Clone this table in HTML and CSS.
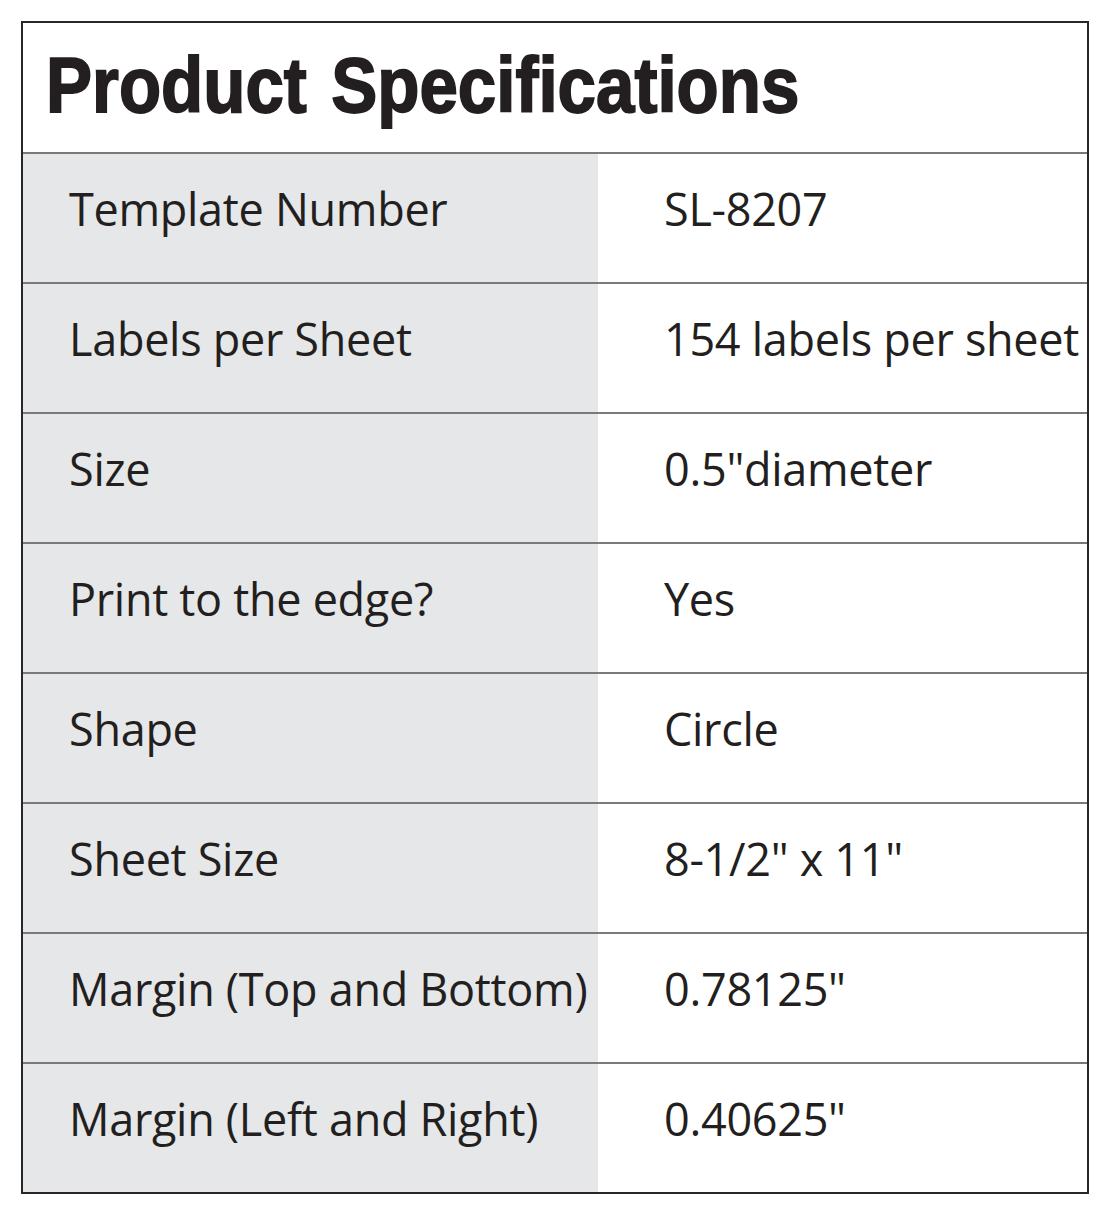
FILE: index.html
```html
<!DOCTYPE html>
<html>
<head>
<meta charset="utf-8">
<link rel="stylesheet" href="styles.css">
</head>
<body>
<div class="specs">
  <div class="title"><span class="title-text">Product Specifications</span></div>
  <div class="row"><div class="label">Template Number</div><div class="value">SL-8207</div></div>
  <div class="row"><div class="label">Labels per Sheet</div><div class="value">154 labels per sheet</div></div>
  <div class="row"><div class="label">Size</div><div class="value">0.5"diameter</div></div>
  <div class="row"><div class="label">Print to the edge?</div><div class="value">Yes</div></div>
  <div class="row"><div class="label">Shape</div><div class="value">Circle</div></div>
  <div class="row"><div class="label">Sheet Size</div><div class="value">8-1/2" x 11"</div></div>
  <div class="row"><div class="label">Margin (Top and Bottom)</div><div class="value">0.78125"</div></div>
  <div class="row"><div class="label">Margin (Left and Right)</div><div class="value">0.40625"</div></div>
</div>
</body>
</html>
```
FILE: styles.css
```css
html, body {
  margin: 0;
  padding: 0;
  background: #ffffff;
}
body {
  padding: 21px 0 0 21px;
}
.specs {
  width: 1068px;
  box-sizing: border-box;
  border: 2px solid #2a2728;
  color: #231f20;
  font-family: "Open Sans", "Noto Sans", sans-serif;
}
.title {
  height: 129px;
  box-sizing: border-box;
  padding: 17px 0 0 23px;
  font-family: "Liberation Sans", Arial, sans-serif;
  font-weight: bold;
  font-size: 78px;
  line-height: 90px;
  color: #231f20;
  white-space: nowrap;
}
.title-text {
  display: inline-block;
  transform: scaleX(0.885);
  transform-origin: left center;
  letter-spacing: 0;
  word-spacing: 6px;
  -webkit-text-stroke: 1.8px #231f20;
}
.row {
  display: grid;
  grid-template-columns: 575px 1fr;
  height: 130px;
  box-sizing: border-box;
  border-top: 2px solid #7a7a7a;
}
.label {
  background: #e6e7e8;
  padding-left: 46px;
  display: flex;
  align-items: center;
  font-size: 45px;
  letter-spacing: -0.3px;
  padding-bottom: 20px;
  white-space: nowrap;
}
.value {
  padding-left: 66px;
  display: flex;
  align-items: center;
  font-size: 45px;
  letter-spacing: -0.3px;
  padding-bottom: 20px;
  white-space: nowrap;
}
```
